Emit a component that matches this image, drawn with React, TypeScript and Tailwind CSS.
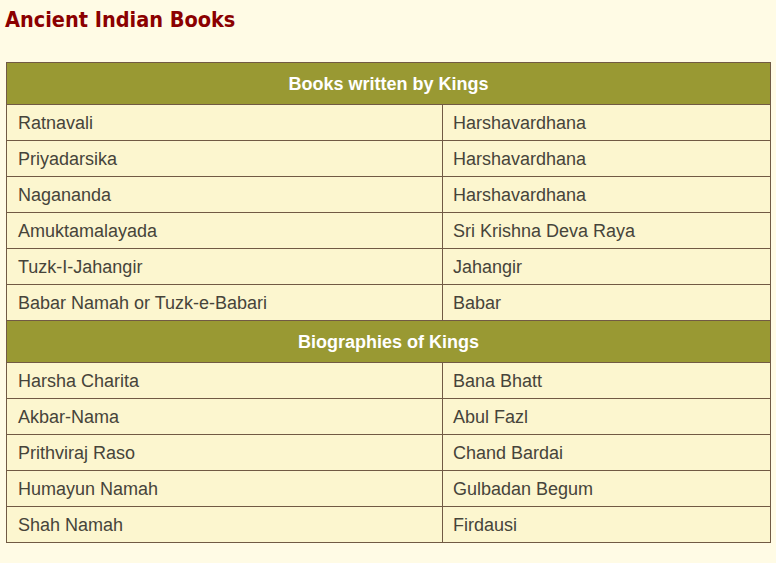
import React from "react";

const sections: { title: string; rows: [string, string][] }[] = [
  {
    title: "Books written by Kings",
    rows: [
      ["Ratnavali", "Harshavardhana"],
      ["Priyadarsika", "Harshavardhana"],
      ["Nagananda", "Harshavardhana"],
      ["Amuktamalayada", "Sri Krishna Deva Raya"],
      ["Tuzk-I-Jahangir", "Jahangir"],
      ["Babar Namah or Tuzk-e-Babari", "Babar"],
    ],
  },
  {
    title: "Biographies of Kings",
    rows: [
      ["Harsha Charita", "Bana Bhatt"],
      ["Akbar-Nama", "Abul Fazl"],
      ["Prithviraj Raso", "Chand Bardai"],
      ["Humayun Namah", "Gulbadan Begum"],
      ["Shah Namah", "Firdausi"],
    ],
  },
];

export default function App() {
  return (
    <div
      className="w-[776px] h-[563px] bg-[#fffbe5] overflow-hidden"
      style={{ fontFamily: '"Liberation Sans", Arial, sans-serif' }}
    >
      <h1
        className="pl-[5px] pt-[7px] h-[62px] text-[21.5px] leading-[26px] font-bold text-[#8b0000]"
        style={{ fontFamily: '"DejaVu Sans Condensed", "DejaVu Sans", Verdana, sans-serif' }}
      >
        Ancient Indian Books
      </h1>
      <div className="ml-[6px] w-[765px] grid grid-cols-[436px_328px] border-l border-t border-[#715a44] bg-[#fcf6cf] text-[18px] leading-[20px] text-[#46443a]">
        {sections.map((s) => (
          <React.Fragment key={s.title}>
            <div className="col-span-2 h-[42px] pt-[1px] flex items-center justify-center bg-[#999933] border-r border-b border-[#715a44] text-white font-bold">
              {s.title}
            </div>
            {s.rows.map(([a, b]) => (
              <React.Fragment key={a}>
                <div className="h-[36px] pt-[1px] flex items-center pl-[11px] border-r border-b border-[#715a44]">
                  {a}
                </div>
                <div className="h-[36px] pt-[1px] flex items-center pl-[10px] border-r border-b border-[#715a44]">
                  {b}
                </div>
              </React.Fragment>
            ))}
          </React.Fragment>
        ))}
      </div>
    </div>
  );
}
